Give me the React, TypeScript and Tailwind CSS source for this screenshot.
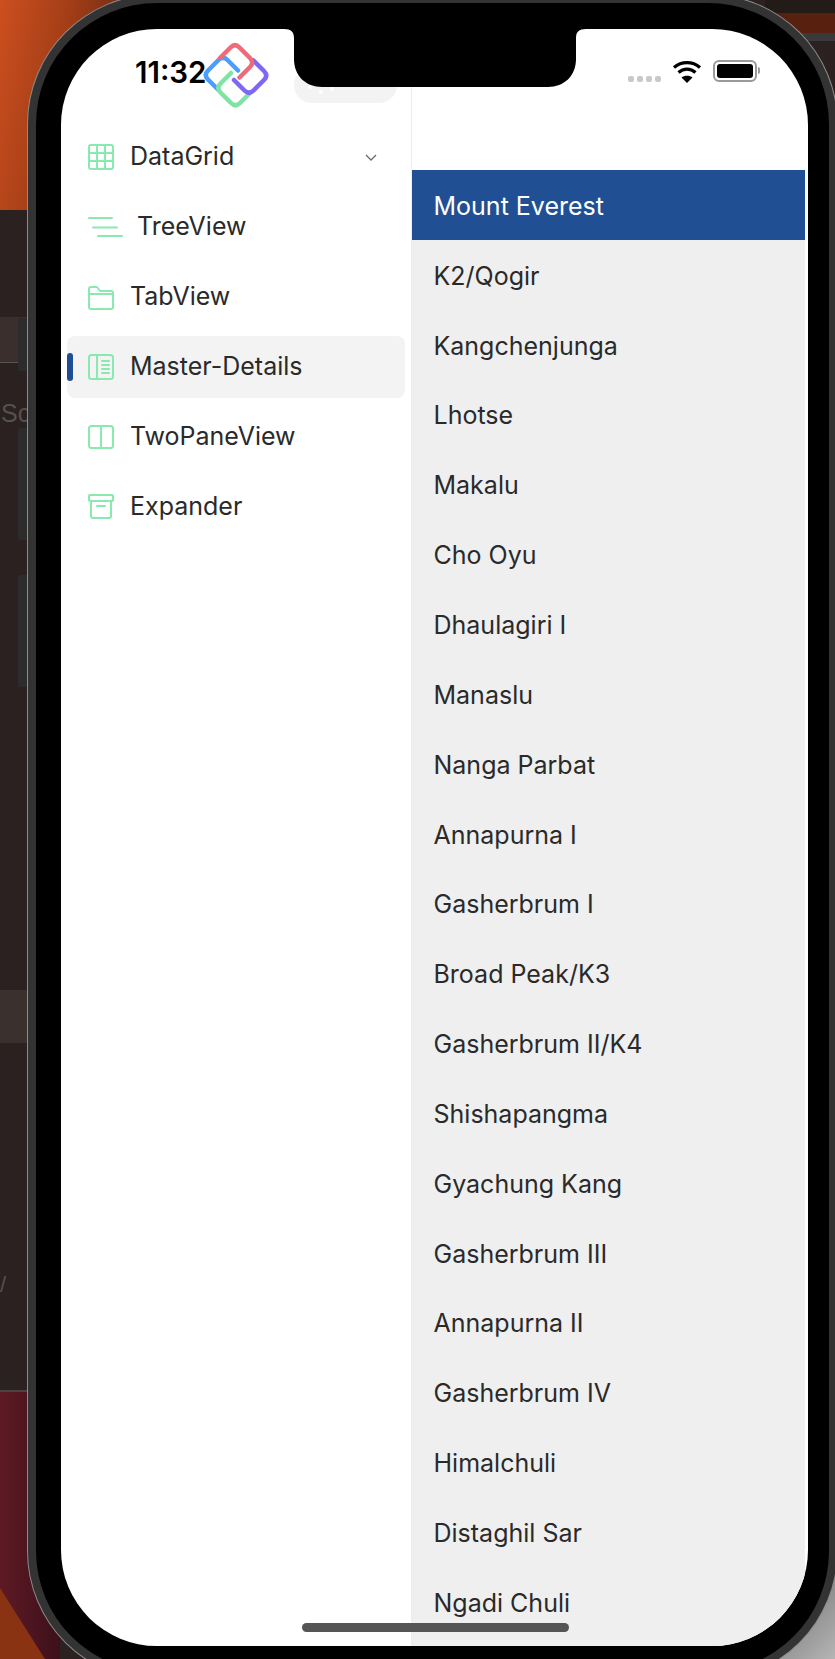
import React from "react";

const peaks = [
  "Mount Everest",
  "K2/Qogir",
  "Kangchenjunga",
  "Lhotse",
  "Makalu",
  "Cho Oyu",
  "Dhaulagiri I",
  "Manaslu",
  "Nanga Parbat",
  "Annapurna I",
  "Gasherbrum I",
  "Broad Peak/K3",
  "Gasherbrum II/K4",
  "Shishapangma",
  "Gyachung Kang",
  "Gasherbrum III",
  "Annapurna II",
  "Gasherbrum IV",
  "Himalchuli",
  "Distaghil Sar",
  "Ngadi Chuli",
];

const Icon = ({ children }: { children: React.ReactNode }) => (
  <svg
    width="28"
    height="28"
    viewBox="0 0 28 28"
    fill="none"
    stroke="#8ae9b0"
    strokeWidth="2"
    strokeLinecap="round"
    strokeLinejoin="round"
    className="shrink-0 overflow-visible"
  >
    {children}
  </svg>
);

const navItems: { label: string; icon: React.ReactNode; gap: string; chevron?: boolean; active?: boolean }[] = [
  {
    label: "DataGrid",
    gap: "ml-[15px]",
    chevron: true,
    icon: (
      <Icon>
        <rect x="2" y="2" width="24" height="24" rx="2" />
        <path d="M10 2v24M18 2v24M2 10h24M2 18h24" />
      </Icon>
    ),
  },
  {
    label: "TreeView",
    gap: "ml-[22px]",
    icon: (
      <Icon>
        <path d="M2 5h23M6 14.500h24M11 23h24" />
      </Icon>
    ),
  },
  {
    label: "TabView",
    gap: "ml-[15px]",
    icon: (
      <Icon>
        <path d="M2 6a2 2 0 0 1 2-2h6l3 4h11a2 2 0 0 1 2 2v14a2 2 0 0 1-2 2H4a2 2 0 0 1-2-2z" />
        <path d="M2 11h24" />
      </Icon>
    ),
  },
  {
    label: "Master-Details",
    gap: "ml-[15px]",
    active: true,
    icon: (
      <Icon>
        <rect x="2" y="2" width="24" height="24" rx="2.5" />
        <path d="M10 2v24M15 8h7M15 12h7M15 16h7M15 20h7" />
      </Icon>
    ),
  },
  {
    label: "TwoPaneView",
    gap: "ml-[15px]",
    icon: (
      <Icon>
        <rect x="2" y="3" width="24" height="22" rx="2.5" />
        <path d="M14 3v22" />
      </Icon>
    ),
  },
  {
    label: "Expander",
    gap: "ml-[15px]",
    icon: (
      <Icon>
        <rect x="2" y="2" width="24" height="6" rx="1" />
        <path d="M4 8v15a2 2 0 0 0 2 2h16a2 2 0 0 0 2-2V8M10 13h8" />
      </Icon>
    ),
  },
];

// one loop of the logo: open on its inner edge so the four loops weave into a pinwheel
const loop = (cx: number, cy: number, start: number) => {
  const D = 19.5;
  const k = 4.5;
  const v = [
    [cx, cy - D],
    [cx + D, cy],
    [cx, cy + D],
    [cx - D, cy],
  ];
  const at = (i: number) => v[(start + i) % 4];
  const toward = (a: number[], b: number[]) => {
    const dx = b[0] > a[0] ? k : b[0] < a[0] ? -k : 0;
    const dy = b[1] > a[1] ? k : b[1] < a[1] ? -k : 0;
    return `${a[0] + dx} ${a[1] + dy}`;
  };
  return [
    `M${toward(at(0), at(1))}`,
    `L${toward(at(1), at(0))}`,
    `Q${at(1)[0]} ${at(1)[1]} ${toward(at(1), at(2))}`,
    `L${toward(at(2), at(1))}`,
    `Q${at(2)[0]} ${at(2)[1]} ${toward(at(2), at(3))}`,
    `L${toward(at(3), at(2))}`,
  ].join("");
};

const Logo = () => (
  <svg width="70" height="70" viewBox="0 0 70 70" fill="none" strokeWidth="4.5" strokeLinecap="round" className="shrink-0">
    <path d={loop(22, 35, 2)} stroke="#4d9dff" />
    <path d={loop(34.5, 48, 1)} stroke="#7fe3a4" />
    <path d={loop(48, 35.5, 0)} stroke="#7d68f5" />
    <path d={loop(34, 22.5, 3)} stroke="#f06a7a" />
  </svg>
);

const SignalDots = () => (
  <div className="flex gap-[3px] mt-[17px]">
    <div className="w-[6px] h-[6px] rounded-[2px] bg-[#c9c9c9]" />
    <div className="w-[6px] h-[6px] rounded-[2px] bg-[#c9c9c9]" />
    <div className="w-[6px] h-[6px] rounded-[2px] bg-[#c9c9c9]" />
    <div className="w-[6px] h-[6px] rounded-[2px] bg-[#c9c9c9]" />
  </div>
);

// status bar and app header lie over the screen content
const TopOverlay = () => (
  <div className="absolute inset-x-0 top-0 h-[90px]">
    <div className="flex items-start">
      <span className="ml-[74px] mt-[23px] w-[66px] whitespace-nowrap text-[29.5px] leading-[40px] font-semibold text-black">
        11:32
      </span>
      <div className="mt-[11px]">
        <Logo />
      </div>
      <div className="flex items-end gap-[7px] ml-[23px] mt-[38px] w-[103px] h-[36px] pl-[14px] pb-[9px] rounded-full bg-[#f3f3f3]">
        <div className="w-[4px] h-[4px] rounded-full bg-white mb-[5px]" />
        <div className="w-[4px] h-[4px] rounded-full bg-white" />
        <div className="w-[4px] h-[4px] rounded-full bg-white mb-[3px]" />
      </div>
      <div className="flex items-start ml-[231px] mt-[30px]">
        <SignalDots />
        <svg width="30" height="23" viewBox="0 0 30 23" fill="none" stroke="black" strokeWidth="3.2" className="ml-[11px] mt-[1px]">
          <path d="M2 7.500C9.500 1 20.500 1 28 7.500" />
          <path d="M6.500 12.500C11.500 8 18.500 8 23.500 12.500" />
          <path d="M15 23L9.500 17.500C12.500 15 17.500 15 20.500 17.500Z" fill="black" stroke="none" />
        </svg>
        <div className="ml-[11px] mt-[1px] w-[44px] h-[22px] rounded-[6px] border-2 border-[#9a9a9a] p-[2px]">
          <div className="w-full h-full rounded-[3px] bg-black" />
        </div>
        <div className="ml-[1px] mt-[8px] w-[2px] h-[7px] rounded-r-sm bg-[#9a9a9a]" />
      </div>
    </div>
    <svg width="302" height="58" viewBox="0 0 302 58" className="absolute left-[223px] top-0">
      <path d="M0 0C7 0 10 3 10 9V30C10 47 22 58 38 58H264C280 58 292 47 292 30V9C292 3 295 0 302 0Z" fill="black" />
    </svg>
  </div>
);

const Desktop = () => (
  <>
    <div className="absolute left-0 top-0 w-[130px] h-full flex flex-col">
      <div className="h-[210px] bg-[linear-gradient(100deg,#cc4f1f_0%,#a63f17_40%,#5f2613_90%)]" />
      <div className="mt-[107px] w-[27px] h-[46px] bg-[#3a2f2c] border-b border-[#5a5350]" />
      <span className="mt-[35px] ml-[1px] h-[30px] text-[25px] leading-[30px] text-[#56504e] [font-family:'Liberation_Sans',sans-serif]">
        Sc
      </span>
      <div className="mt-[562px] w-[27px] h-[53px] bg-[#3a302e]" />
      <span className="mt-[227px] h-[30px] text-[22px] leading-[30px] text-[#56504e] [font-family:'Liberation_Sans',sans-serif]">
        /
      </span>
      <div className="relative mt-[90px] flex-1 w-[60px] border-t-2 border-[#4a4442] bg-[linear-gradient(90deg,#5e1a24,#3c101a)]">
        <div className="absolute left-0 bottom-0 w-[45px] h-[71px] bg-[#8a3312] [clip-path:polygon(0_0,100%_100%,0_100%)]" />
      </div>
    </div>
    <div className="absolute right-0 top-0 w-[70px] flex flex-col">
      <div className="h-[13px] bg-[#221b18]" />
      <div className="h-[20px] bg-[#57200f]" />
      <div className="h-[8px] bg-[#3a3a3a]" />
    </div>
    <div className="absolute right-0 bottom-0 w-[60px] h-[90px] bg-[linear-gradient(135deg,#666,#b5b5b5)]" />
    {/* side buttons */}
    <div className="absolute left-[18px] top-[318px] w-[10px] flex flex-col">
      <div className="h-[53px] rounded-l-[2px] bg-[#2c2c2c]" />
      <div className="mt-[57px] h-[112px] rounded-l-[2px] bg-[#2c2c2c]" />
      <div className="mt-[35px] h-[112px] rounded-l-[2px] bg-[#2c2c2c]" />
    </div>
  </>
);

const App = () => {
  return (
    <div className="relative w-[835px] h-[1659px] overflow-hidden bg-[#2a2120] [font-family:Inter,sans-serif]">
      <Desktop />

      {/* phone frame */}
      <div className="relative ml-[27px] mt-[-6px] w-[811px] h-[1687px] rounded-[130px] bg-[#8c8c8c] p-[1px]">
        <div className="w-full h-full rounded-[129px] bg-[#333333] p-[8px]">
          <div className="w-full h-full rounded-[121px] bg-black pt-[26px] pl-[25px]">
            {/* screen */}
            <div className="relative flex w-[747px] h-[1617px] rounded-[96px] overflow-hidden bg-white">
              {/* sidebar */}
              <div className="flex flex-col w-[351px] h-full border-r border-[#ececec] pt-[93px]">
                {navItems.map((item) => (
                  <div key={item.label} className="flex items-center h-[70px]">
                    <div
                      className={`relative flex items-center ml-[6px] w-[338px] h-[62px] pl-[20px] rounded-lg ${
                        item.active ? "bg-[#f3f3f3]" : ""
                      }`}
                    >
                      {item.active && <div className="absolute left-0 top-[17px] w-[6px] h-[28px] rounded-full bg-[#1f4e95]" />}
                      {item.icon}
                      <span className={`${item.gap} pb-[2px] text-[25px] leading-[32px] text-[#2a2a2a]`}>{item.label}</span>
                      {item.chevron && (
                        <svg width="14" height="9" viewBox="0 0 14 9" fill="none" stroke="#6b6b6b" strokeWidth="1.3" className="ml-auto mr-[27px]">
                          <path d="M2 2l5 5 5-5" />
                        </svg>
                      )}
                    </div>
                  </div>
                ))}
              </div>

              {/* list pane */}
              <div className="flex flex-col w-[393px] h-full pt-[141px]">
                <div className="flex-1 overflow-hidden bg-[#efefef]">
                  {peaks.map((peak, index) => (
                    <div
                      key={peak}
                      className={`flex items-center h-[69.85px] pl-[21.500px] pt-[2px] text-[25px] leading-[32px] ${
                        index === 0 ? "bg-[#205093] text-white" : "text-[#2a2a2a]"
                      }`}
                    >
                      {peak}
                    </div>
                  ))}
                </div>
              </div>

              <TopOverlay />

              {/* home indicator */}
              <div className="absolute left-[241px] bottom-[14px] w-[267px] h-[9px] rounded-full bg-[#555555]" />
            </div>
          </div>
        </div>
      </div>
    </div>
  );
};

export default App;
